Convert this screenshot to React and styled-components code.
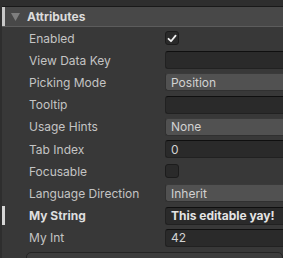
import React from "react";
import styled, { createGlobalStyle } from "styled-components";

const Global = createGlobalStyle`
  html, body { margin: 0; padding: 0; background: #383838; }
  body { font-family: Inter, "Noto Sans", sans-serif; }
`;

const Panel = styled.div`
  width: 283px;
  height: 258px;
  overflow: hidden;
  background: #383838;
  border-left: 2px solid #2e2e2e;
  box-sizing: border-box;
  display: flex;
  flex-direction: column;
`;

const TopStrip = styled.div`
  height: 6px;
  flex: none;
  background: #2e2e2e;
  border-bottom: 1px solid #191919;
`;

const Header = styled.div`
  height: 19px;
  flex: none;
  display: flex;
  align-items: center;
  background: #484848;
  border-bottom: 1px solid #5c5c5c;
`;

const Mark = styled.div`
  width: 3px;
  align-self: stretch;
  flex: none;
  background: ${(p) => (p.$on ? "#c8c8c8" : "transparent")};
`;

const Arrow = styled.svg`
  width: 9px;
  height: 8px;
  margin-left: 6px;
  margin-right: 7px;
  flex: none;
`;

const HeaderTitle = styled.span`
  font-size: 12px;
  font-weight: 700;
  color: #dcdcdc;
`;

const Rows = styled.div`
  display: grid;
  grid-auto-rows: 22.2px;
  flex: none;
`;

const Row = styled.div`
  display: grid;
  grid-template-columns: 3px 160px 1fr;
  align-items: center;
`;

const RowMark = styled.div`
  align-self: center;
  height: 19px;
  background: ${(p) => (p.$on ? "#d6d6d6" : "transparent")};
`;

const Label = styled.span`
  padding-left: 24px;
  font-size: 12px;
  font-weight: ${(p) => (p.$bold ? 700 : 400)};
  color: ${(p) => (p.$bold ? "#dedede" : "#c4c4c4")};
  white-space: nowrap;
`;

const Field = styled.div`
  height: 18px;
  box-sizing: border-box;
  border-radius: 3px 0 0 3px;
  border: 1px solid ${(p) => (p.$kind === "drop" ? "#303030" : "#212121")};
  border-right: none;
  border-top-color: ${(p) => (p.$kind === "drop" ? "#3a3a3a" : "#0f0f0f")};
  background: ${(p) => (p.$kind === "drop" ? "#515151" : "#2a2a2a")};
  display: flex;
  align-items: center;
  padding-left: 5px;
  font-size: 12px;
  font-weight: ${(p) => (p.$bold ? 700 : 400)};
  color: ${(p) => (p.$bold ? "#e4e4e4" : "#d2d2d2")};
  white-space: nowrap;
  overflow: hidden;
`;

const Check = styled.div`
  width: 14px;
  height: 14px;
  box-sizing: border-box;
  border-radius: 3px;
  background: #2a2a2a;
  border: 1px solid #1c1c1c;
  display: flex;
  align-items: center;
  justify-content: center;
`;

const Footer = styled.div`
  margin: 3px 0 0 24px;
  height: 30px;
  flex: none;
  border: 1px solid #242424;
  border-radius: 5px;
  background: #3c3c3c;
  display: flex;
  justify-content: center;
  padding-top: 6px;
  padding-left: 60px;
  font-size: 12px;
  color: #c4c4c4;
`;

const CheckMark = () => (
  <svg width="10" height="9" viewBox="0 0 10 9">
    <path d="M1.5 4.8 L4 7.2 L8.6 1.6" fill="none" stroke="#f0f0f0" strokeWidth="1.8" strokeLinecap="round" strokeLinejoin="round" />
  </svg>
);

const rows = [
  { label: "Enabled", type: "check", value: true },
  { label: "View Data Key", type: "text", value: "" },
  { label: "Picking Mode", type: "drop", value: "Position" },
  { label: "Tooltip", type: "text", value: "" },
  { label: "Usage Hints", type: "drop", value: "None" },
  { label: "Tab Index", type: "text", value: "0" },
  { label: "Focusable", type: "check", value: false },
  { label: "Language Direction", type: "drop", value: "Inherit" },
  { label: "My String", type: "text", value: "This editable yay!", bold: true },
  { label: "My Int", type: "text", value: "42" },
];

export default function App() {
  return (
    <>
      <Global />
      <Panel>
        <TopStrip />
        <Header>
          <Mark $on />
          <Arrow viewBox="0 0 9 8">
            <path d="M0 0 H9 L4.5 8 Z" fill="#7e7e7e" />
          </Arrow>
          <HeaderTitle>Attributes</HeaderTitle>
        </Header>
        <Rows>
          {rows.map((r) => (
            <Row key={r.label}>
              <RowMark $on={r.bold} />
              <Label $bold={r.bold}>{r.label}</Label>
              {r.type === "check" ? (
                <Check>{r.value && <CheckMark />}</Check>
              ) : (
                <Field $kind={r.type} $bold={r.bold}>
                  {r.value}
                </Field>
              )}
            </Row>
          ))}
        </Rows>
        <Footer>Add Element</Footer>
      </Panel>
    </>
  );
}
